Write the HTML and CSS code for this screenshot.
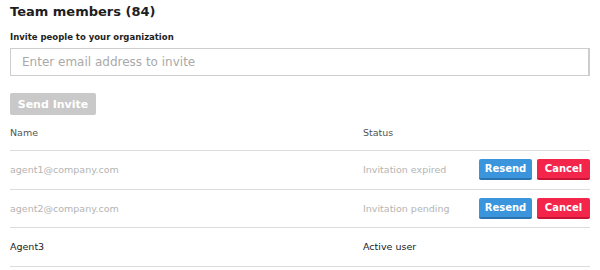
FILE: index.html
```html
<!DOCTYPE html>
<html>
<head>
<meta charset="utf-8">
<link rel="stylesheet" href="styles.css">
</head>
<body>
<div class="page">
  <h1 class="title">Team members (84)</h1>
  <label class="label" for="email">Invite people to your organization</label>
  <input class="email-input" id="email" type="text" placeholder="Enter email address to invite">
  <button class="btn btn-send" type="button">Send Invite</button>
  <div class="table">
    <div class="row row-head">
      <div class="col-name">Name</div>
      <div class="col-status">Status</div>
    </div>
    <div class="row">
      <div class="col-name muted">agent1@company.com</div>
      <div class="col-status muted">Invitation expired</div>
      <div class="col-actions">
        <button class="btn btn-small btn-blue" type="button">Resend</button>
        <button class="btn btn-small btn-red" type="button">Cancel</button>
      </div>
    </div>
    <div class="row">
      <div class="col-name muted">agent2@company.com</div>
      <div class="col-status muted">Invitation pending</div>
      <div class="col-actions">
        <button class="btn btn-small btn-blue" type="button">Resend</button>
        <button class="btn btn-small btn-red" type="button">Cancel</button>
      </div>
    </div>
    <div class="row">
      <div class="col-name dark">Agent3</div>
      <div class="col-status dark">Active user</div>
      <div class="col-actions"></div>
    </div>
  </div>
</div>
</body>
</html>
```
FILE: styles.css
```css
* { box-sizing: border-box; }
html, body { margin: 0; padding: 0; background: #fff; }
body {
  font-family: "DejaVu Sans", "Open Sans", sans-serif;
  color: #222;
}
.page {
  width: 600px;
  padding: 0 10px;
  display: flex;
  flex-direction: column;
  align-items: flex-start;
}
.title {
  margin: 3px 0 0;
  font-size: 13px;
  line-height: 17px;
  font-weight: bold;
  color: #1e1e1e;
}
.label {
  margin-top: 12px;
  font-size: 8.5px;
  line-height: 11px;
  font-weight: bold;
  color: #1e1e1e;
}
.email-input {
  margin-top: 5px;
  width: 580px;
  height: 28px;
  border: 1px solid #cdcdcd;
  border-right-width: 2px;
  padding: 0 11px;
  font-family: inherit;
  font-size: 12px;
  color: #333;
  outline: none;
}
.email-input::placeholder { color: #a9a9a9; }
.btn {
  font-family: inherit;
  font-weight: bold;
  color: #fff;
  border: 0;
  cursor: pointer;
}
.btn-send {
  margin-top: 17px;
  width: 86px;
  height: 22px;
  background: #c9c9c9;
  border-radius: 2px;
  font-size: 11px;
  padding: 0;
}
.table { width: 580px; }
.row {
  display: flex;
  align-items: center;
  height: 38.5px;
  border-bottom: 1px solid #dcdcdc;
  font-size: 9.5px;
}
.row-head {
  height: 36px;
  color: #555;
}
.col-name { width: 353px; }
.col-status { flex: 1; }
.col-actions {
  display: flex;
  gap: 5px;
}
.muted { color: #b4b4b4; }
.dark { color: #1a1a1a; }
.btn-small {
  width: 53px;
  height: 21px;
  border-radius: 2px;
  font-size: 10px;
  padding: 0;
}
.btn-blue {
  background: #3a95dc;
  border-bottom: 2px solid #2a72b0;
}
.btn-red {
  background: #f4254a;
  border-bottom: 2px solid #c81535;
}
```
